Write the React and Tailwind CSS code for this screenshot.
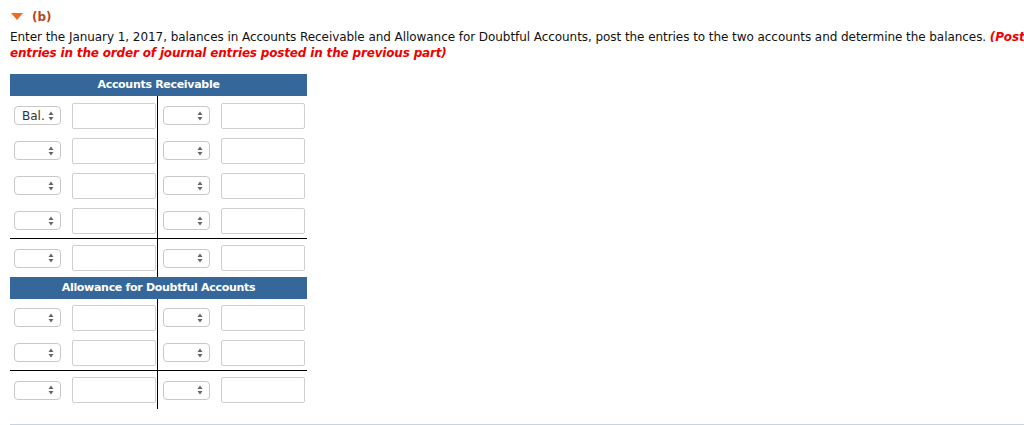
import React from 'react';

function Arrows() {
  return (
    <svg width="6" height="10" viewBox="0 0 6 10" className="shrink-0">
      <path d="M3 0.5 L5.5 4 L0.5 4 Z" fill="#666" />
      <path d="M3 9.5 L5.5 6 L0.5 6 Z" fill="#666" />
    </svg>
  );
}

function Select({ label }) {
  return (
    <div className="flex h-[19px] w-[47px] items-center justify-between rounded-[4px] border border-[#c8c8c8] bg-white pl-[7px] pr-[6px] text-[12px] text-[#333]">
      <span>{label || ''}</span>
      <Arrows />
    </div>
  );
}

function Input() {
  return <div className="h-[26px] w-[84px] rounded-[2px] border border-[#cfcfcf] bg-white" />;
}

function Row({ label, h = 'h-[35px]' }) {
  return (
    <div className={`flex ${h}`}>
      <div className="flex w-[148px] items-center border-r border-black pl-[4px]">
        <Select label={label} />
        <div className="ml-[11px]">
          <Input />
        </div>
      </div>
      <div className="flex flex-1 items-center pl-[5px]">
        <Select />
        <div className="ml-[11px]">
          <Input />
        </div>
      </div>
    </div>
  );
}

function Header({ title }) {
  return (
    <div className="flex h-[22px] items-center justify-center bg-[#35679a] text-[11px] font-bold tracking-[-0.3px] text-white">
      {title}
    </div>
  );
}

export default function App() {
  return (
    <div className="h-[425px] w-[1024px] overflow-hidden bg-white font-['DejaVu_Sans',Verdana,sans-serif] text-[#111]">
      <div className="pl-[10px] pt-[9px]">
        <div className="flex h-[16px] items-center gap-[9px]">
          <svg width="12" height="8" viewBox="0 0 12 8" className="ml-[1px]">
            <path d="M0 0 L12 0 L6 7 Z" fill="#f26a21" />
          </svg>
          <span className="text-[12px] font-bold text-[#b9461a]">(b)</span>
        </div>
        <p className="mt-[4px] text-[12px] leading-[16px]">
          <span className="whitespace-nowrap tracking-[-0.06px]">
            Enter the January 1, 2017, balances in Accounts Receivable and Allowance for Doubtful Accounts, post the entries to the two accounts and determine the balances.{' '}
            <span className="font-bold italic tracking-[-0.15px] text-[#ee0000]">(Post</span>
          </span>
          <br />
          <span className="font-bold italic tracking-[-0.17px] text-[#ee0000]">
            entries in the order of journal entries posted in the previous part)
          </span>
        </p>

        <div className="mt-[13px] w-[297px]">
          <Header title="Accounts Receivable" />
          <div className="flex h-[2px]">
            <div className="w-[148px] border-r border-black" />
          </div>
          <Row label="Bal." />
          <Row />
          <Row />
          <Row />
          <div className="h-px bg-black" />
          <Row h="h-[38px]" />
          <Header title="Allowance for Doubtful Accounts" />
          <div className="flex h-[1px]">
            <div className="w-[148px] border-r border-black" />
          </div>
          <Row />
          <Row />
          <div className="h-px bg-black" />
          <Row h="h-[38px]" />
        </div>
      </div>
      <div className="ml-[10px] mt-[15px] h-px bg-[#c9d3dd]" />
    </div>
  );
}
